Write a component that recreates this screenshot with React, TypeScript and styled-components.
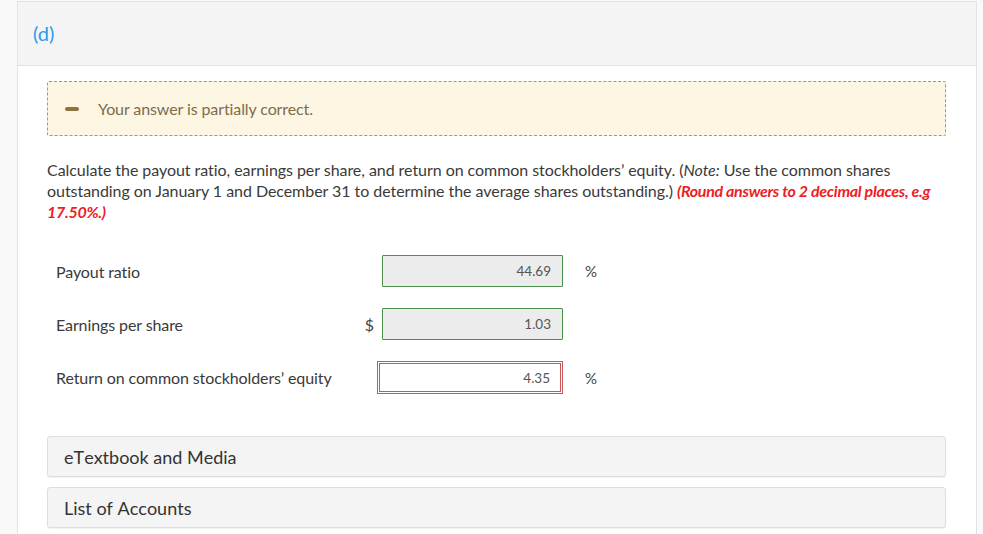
import React from "react";
import styled, { createGlobalStyle } from "styled-components";

const GlobalStyle = createGlobalStyle`
  html, body {
    margin: 0;
    padding: 0;
    background: #f9f9f9;
    font-family: Lato, "Open Sans", sans-serif;
    color: #333;
  }
`;

const Page = styled.div`
  padding: 1px 0 0 17px;
  width: 983px;
  height: 534px;
  box-sizing: border-box;
  overflow: hidden;
`;

const Panel = styled.section`
  width: 960px;
  min-height: 560px;
  box-sizing: border-box;
  border: 1px solid #e3e3e3;
  background: #fff;
`;

const Header = styled.header`
  height: 63px;
  display: flex;
  align-items: center;
  padding-left: 15px;
  background: #f4f4f4;
  border-bottom: 1px solid #e2e2e2;
`;

const PartLabel = styled.span`
  font-size: 20px;
  color: #2f9be9;
  margin-top: -2px;
`;

const Body = styled.div`
  padding: 15px 30px 0 29px;
`;

const Feedback = styled.div`
  height: 55px;
  box-sizing: border-box;
  display: flex;
  align-items: center;
  gap: 19px;
  padding: 0 0 0 17px;
  background: #fdf6e3;
  border: 1px dashed #a8966e;
  border-radius: 2px;
`;

const Minus = styled.span`
  width: 14px;
  height: 4px;
  border-radius: 2px;
  background: #8e7240;
`;

const FeedbackText = styled.span`
  font-size: 16px;
  color: #7d6c4d;
  letter-spacing: -0.1px;
`;

const Question = styled.p`
  margin: 23px 0 0;
  font-size: 16px;
  line-height: 21px;
  color: #3a3a3a;
  letter-spacing: -0.05px;
`;

const Hint = styled.strong`
  color: #ee1c25;
  font-style: italic;
  font-weight: 700;
  letter-spacing: -0.3px;
`;

const Rows = styled.div`
  margin-top: 33px;
  display: flex;
  flex-direction: column;
  gap: 21px;
`;

const Row = styled.div`
  display: grid;
  grid-template-columns: 296px 30px 181px 40px;
  align-items: center;
  height: 32px;
  padding-left: 9px;
`;

const Label = styled.span`
  font-size: 16px;
  color: #3a3a3a;
  letter-spacing: -0.1px;
`;

const Currency = styled.span`
  font-size: 16px;
  color: #444;
  justify-self: end;
  padding-right: 8px;
`;

const Field = styled.div<{ $state: "correct" | "wrong" }>`
  box-sizing: border-box;
  height: ${(p) => (p.$state === "wrong" ? "33px" : "32px")};
  display: flex;
  align-items: center;
  justify-content: flex-end;
  padding-right: 11px;
  font-size: 13.5px;
  color: #555;
  ${(p) =>
    p.$state === "correct"
      ? `
    background: #ececec;
    border: 1.5px solid #4a8f4a;
    border-radius: 1px;
  `
      : `
    background: #fff;
    border: 3px double #c8575a;
    margin-left: -5px;
    padding-right: 10px;
  `}
`;

const Unit = styled.span`
  font-size: 15px;
  color: #444;
  justify-self: start;
  padding-left: 22px;
`;

const Accordions = styled.div`
  margin-top: 43px;
  display: flex;
  flex-direction: column;
  gap: 10px;
`;

const AccordionItem = styled.div`
  height: 41px;
  box-sizing: border-box;
  display: flex;
  align-items: center;
  padding-left: 16px;
  background: #f4f4f4;
  border: 1px solid #dedede;
  border-radius: 3px;
  box-shadow: 0 1px 1px rgba(0, 0, 0, 0.06);
  font-size: 18px;
  color: #333;
  font-kerning: none;
`;

interface RowData {
  label: string;
  currency?: string;
  value: string;
  unit?: string;
  state: "correct" | "wrong";
}

const rows: RowData[] = [
  { label: "Payout ratio", value: "44.69", unit: "%", state: "correct" },
  { label: "Earnings per share", currency: "$", value: "1.03", state: "correct" },
  {
    label: "Return on common stockholders\u2019 equity",
    value: "4.35",
    unit: "%",
    state: "wrong",
  },
];

function App() {
  return (
    <>
      <GlobalStyle />
      <Page>
        <Panel>
          <Header>
            <PartLabel>(d)</PartLabel>
          </Header>
          <Body>
            <Feedback>
              <Minus />
              <FeedbackText>Your answer is partially correct.</FeedbackText>
            </Feedback>
            <Question>
              Calculate the payout ratio, earnings per share, and return on common
              stockholders’ equity. (<em>Note:</em> Use the common shares
              outstanding on January 1 and December 31 to determine the average
              shares outstanding.){" "}
              <Hint>(Round answers to 2 decimal places, e.g 17.50%.)</Hint>
            </Question>
            <Rows>
              {rows.map((r) => (
                <Row key={r.label}>
                  <Label>{r.label}</Label>
                  <Currency>{r.currency}</Currency>
                  <Field $state={r.state}>{r.value}</Field>
                  <Unit>{r.unit}</Unit>
                </Row>
              ))}
            </Rows>
            <Accordions>
              <AccordionItem>eTextbook and Media</AccordionItem>
              <AccordionItem>List of Accounts</AccordionItem>
            </Accordions>
          </Body>
        </Panel>
      </Page>
    </>
  );
}

export default App;
